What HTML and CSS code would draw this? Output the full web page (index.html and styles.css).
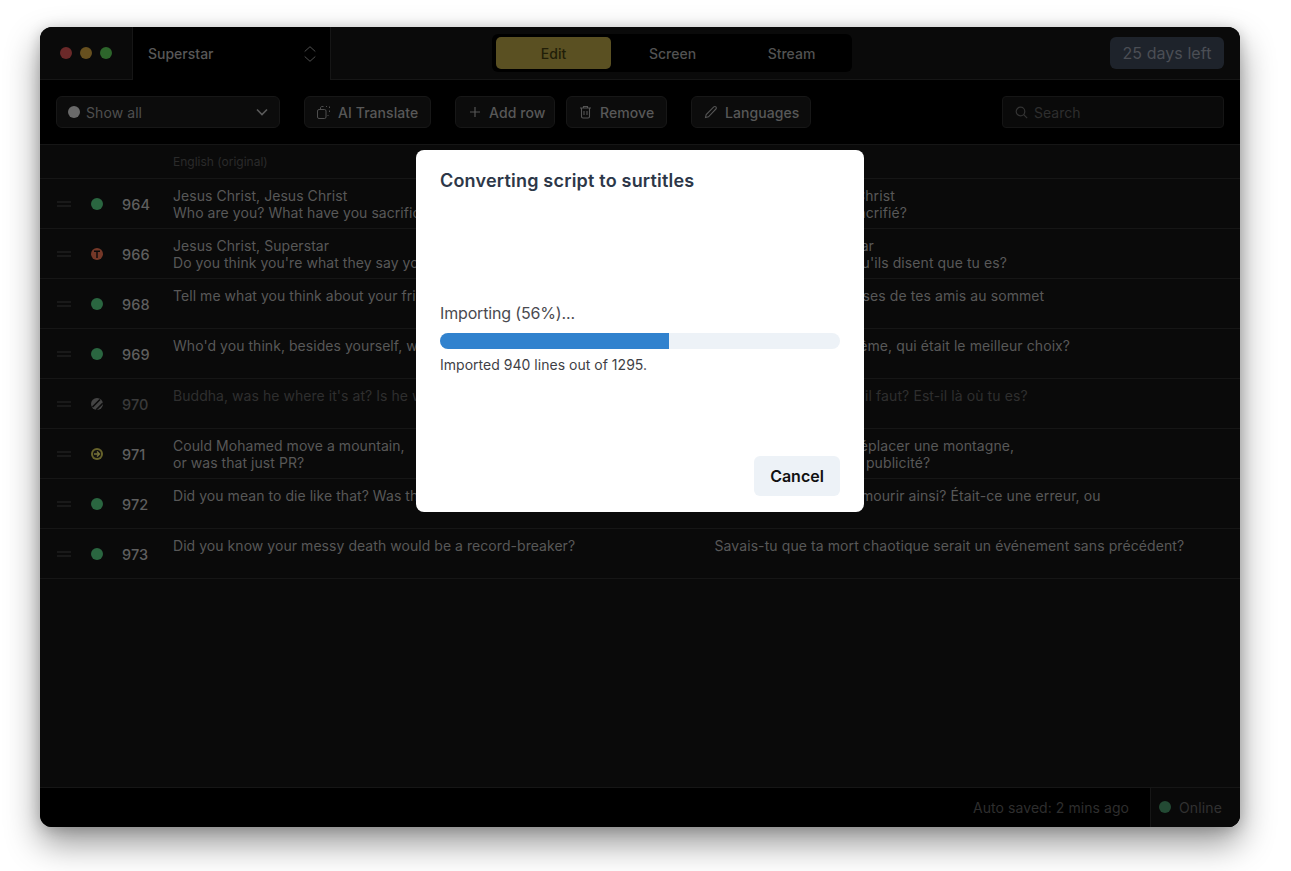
FILE: index.html
```html
<!DOCTYPE html>
<html lang="en">
<head>
<meta charset="utf-8">
<title>Superstar</title>
<link rel="stylesheet" href="styles.css">
</head>
<body>
<div class="window">
  <header class="topbar">
    <div class="traffic">
      <span class="light red"></span><span class="light amber"></span><span class="light green"></span>
    </div>
    <div class="project">
      <span>Superstar</span>
      <svg class="updown" width="12" height="16" viewBox="0 0 12 16" fill="none" stroke="#4e4e4e" stroke-width="1"><path d="M.7 5.500L6 .7l5.300 4.800M.7 10.500L6 15.300l5.300-4.800"/></svg>
    </div>
    <div class="tabs-wrap">
      <nav class="tabs">
        <span class="tab active">Edit</span>
        <span class="tab">Screen</span>
        <span class="tab">Stream</span>
      </nav>
    </div>
    <div class="badge">25 days left</div>
  </header>

  <div class="toolbar">
    <div class="btn select">
      <span class="select-dot"></span><span class="select-label">Show all</span>
      <svg width="12" height="8" viewBox="0 0 12 8" fill="none" stroke="#5a5a5a" stroke-width="1.6"><path d="M1 1.500l5 5 5-5"/></svg>
    </div>
    <div class="btn b-ai">
      <svg width="13" height="13" viewBox="0 0 13 13" fill="none" stroke="#4e4e4e" stroke-width="1"><rect x=".5" y="3.500" width="8.500" height="9" rx="1.500"/><path d="M3.500 3V2c0-.8.600-1.500 1.500-1.500h1.500M9 .5h1M12.500 .5V2M12.500 4.500V6M10.500 9.500h1"/></svg>
      <span>AI Translate</span>
    </div>
    <div class="btn b-add">
      <svg width="12" height="12" viewBox="0 0 12 12" fill="none" stroke="#555" stroke-width="1.200"><path d="M6 1v10M1 6h10"/></svg>
      <span>Add row</span>
    </div>
    <div class="btn b-remove">
      <svg width="13" height="14" viewBox="0 0 13 14" fill="none" stroke="#555" stroke-width="1.100"><path d="M1 3h11M4.500 3V1.500h4V3M2.500 3v8.500c0 .8.600 1.500 1.500 1.500h5c.9 0 1.500-.7 1.500-1.500V3M5 6v4M8 6v4"/></svg>
      <span>Remove</span>
    </div>
    <div class="btn b-lang">
      <svg width="14" height="14" viewBox="0 0 14 14" fill="none" stroke="#555" stroke-width="1.100"><path d="M1.500 12.500l.7-3L9.800 1.900c.6-.6 1.500-.6 2.100 0s.6 1.500 0 2.100L4.500 11.800z"/></svg>
      <span>Languages</span>
    </div>
    <div class="search">
      <svg width="13" height="13" viewBox="0 0 13 13" fill="none" stroke="#333" stroke-width="1.200"><circle cx="5.500" cy="5.500" r="4.300"/><path d="M8.700 8.700l3.500 3.500"/></svg>
      <span>Search</span>
    </div>
  </div>

  <div class="table-head"><span>English (original)</span></div>

  <main class="rows">
    <div class="row">
      <span class="handle"></span><span class="dot ok"></span><span class="num">964</span>
      <div class="cell">Jesus Christ, Jesus Christ<br>Who are you? What have you sacrificed?</div>
      <div class="cell">Jésus-Christ, Jésus-Christ<br>Qui es-tu? Qu'as-tu sacrifié?</div>
    </div>
    <div class="row">
      <span class="handle"></span>
      <span class="dot warn"><svg width="8" height="8" viewBox="0 0 8 8" fill="none" stroke="#0b0b0b" stroke-width="1.400"><path d="M1 1.200h6M4 1.200V8"/></svg></span>
      <span class="num">966</span>
      <div class="cell">Jesus Christ, Superstar<br>Do you think you're what they say you are?</div>
      <div class="cell">Jésus-Christ, Superstar<br>Penses-tu être celui qu'ils disent que tu es?</div>
    </div>
    <div class="row">
      <span class="handle"></span><span class="dot ok"></span><span class="num">968</span>
      <div class="cell">Tell me what you think about your friends at the top</div>
      <div class="cell">Dis-moi ce que tu penses de tes amis au sommet</div>
    </div>
    <div class="row">
      <span class="handle"></span><span class="dot ok"></span><span class="num">969</span>
      <div class="cell">Who'd you think, besides yourself, was the pick of the crop?</div>
      <div class="cell">Selon toi, à part toi-même, qui était le meilleur choix?</div>
    </div>
    <div class="row dim">
      <span class="handle"></span>
      <span class="dot off"><svg width="12" height="12" viewBox="0 0 12 12" fill="none" stroke="#0b0b0b" stroke-width="1.600"><path d="M1.500 9L9 1.500M5 12l7-7"/></svg></span>
      <span class="num">970</span>
      <div class="cell">Buddha, was he where it's at? Is he where you are?</div>
      <div class="cell">Bouddha, était-il là où il faut? Est-il là où tu es?</div>
    </div>
    <div class="row">
      <span class="handle"></span>
      <span class="dot next"><svg width="12" height="12" viewBox="0 0 12 12" fill="none" stroke="#77733a" stroke-width="1.300"><path d="M3 6h5.500M6 3.500L8.500 6 6 8.500"/></svg></span>
      <span class="num">971</span>
      <div class="cell">Could Mohamed move a mountain,<br>or was that just PR?</div>
      <div class="cell">Mahomet pourrait-il déplacer une montagne,<br>Ou était-ce juste de la publicité?</div>
    </div>
    <div class="row">
      <span class="handle"></span><span class="dot ok"></span><span class="num">972</span>
      <div class="cell">Did you mean to die like that? Was that a mistake, or</div>
      <div class="cell">Voulais-tu réellement mourir ainsi? Était-ce une erreur, ou</div>
    </div>
    <div class="row">
      <span class="handle"></span><span class="dot ok"></span><span class="num">973</span>
      <div class="cell">Did you know your messy death would be a record-breaker?</div>
      <div class="cell">Savais-tu que ta mort chaotique serait un événement sans précédent?</div>
    </div>
  </main>

  <footer class="footer">
    <span class="saved">Auto saved: 2 mins ago</span>
    <div class="status"><span class="status-dot"></span><span>Online</span></div>
  </footer>

  <section class="modal">
    <h2 class="modal-title">Converting script to surtitles</h2>
    <div class="progress-block">
      <div class="progress-label">Importing (56%)...</div>
      <div class="track"><div class="fill" style="width:57.200%"></div></div>
      <div class="progress-note">Imported 940 lines out of 1295.</div>
    </div>
    <div class="modal-foot"><button class="cancel">Cancel</button></div>
  </section>
</div>
</body>
</html>
```
FILE: styles.css
```css
* { box-sizing: border-box; }
html, body { margin: 0; height: 100%; overflow: hidden; background: #fff; }
body { padding: 27px 0 0 40px; font-family: Inter, "Liberation Sans", sans-serif; }

.window {
  position: relative;
  width: 1200px;
  height: 800px;
  display: flex;
  flex-direction: column;
  background: #0a0a0a;
  border-radius: 12px;
  box-shadow: 0 16px 34px rgba(0,0,0,.42), 0 2px 14px rgba(0,0,0,.18);
  overflow: hidden;
}

.topbar {
  height: 53px;
  flex: none;
  display: flex;
  border-bottom: 1px solid #161616;
  background: #0a0a0a;
}
.traffic {
  width: 92px;
  display: flex;
  align-items: center;
  gap: 8px;
  padding: 0 0 0 20px;
}
.light { width: 12px; height: 12px; border-radius: 50%; }
.red { background: #6a2929; }
.amber { background: #67501f; }
.green { background: #2d652b; }
.project {
  width: 199px;
  margin-bottom: -1px;
  display: flex;
  align-items: center;
  justify-content: space-between;
  padding: 0 14px 0 15px;
  background: #000;
  border-left: 1px solid #161616;
  border-right: 1px solid #161616;
  color: #585858;
  font-size: 14px;
  font-weight: 500;
}
.tabs-wrap { flex: 1; display: flex; align-items: center; margin-left: 161px; }
.tabs {
  width: 360px;
  height: 38px;
  padding: 3px 0 3px 4px;
  display: flex;
  background: #000;
  border-radius: 6px;
}
.tab {
  flex: none;
  width: 119px;
  display: flex;
  align-items: center;
  justify-content: center;
  color: #525252;
  font-size: 14px;
  font-weight: 500;
  border-radius: 5px;
}
.tab.active { width: 115px; margin-right: 2px; background: #5a5022; color: #211e08; }
.badge {
  width: 114px;
  height: 32px;
  margin: 10px 16px 0 0;
  display: flex;
  align-items: center;
  justify-content: center;
  background: #1e232b;
  border-radius: 6px;
  color: #4b4e55;
  font-size: 16px;
  letter-spacing: .05px;
}

.toolbar {
  height: 65px;
  flex: none;
  display: flex;
  align-items: center;
  padding: 0 16px;
  background: #000;
  border-bottom: 1px solid #161616;
}
.btn {
  height: 32px;
  display: flex;
  align-items: center;
  gap: 8px;
  background: #0c0c0c;
  border: 1px solid #171717;
  border-radius: 6px;
  color: #585858;
  font-size: 14px;
  font-weight: 500;
  letter-spacing: .08px;
}
.select { width: 224px; padding: 0 11px 0 11px; font-weight: 400; gap: 6px; }
.select-label { flex: 1; color: #4f4f4f; }
.select-dot { width: 12px; height: 12px; border-radius: 50%; background: #696969; }
.b-ai { width: 127px; margin-left: 24px; padding-left: 12px; }
.b-add { width: 100px; margin-left: 24px; padding-left: 13px; }
.b-remove { width: 101px; margin-left: 11px; padding-left: 12px; }
.b-lang { width: 120px; margin-left: 24px; padding-left: 12px; gap: 7px; }
.search {
  width: 222px;
  height: 32px;
  margin-left: auto;
  display: flex;
  align-items: center;
  gap: 6px;
  padding-left: 12px;
  background: #0a0a0a;
  border: 1px solid #151515;
  border-radius: 4px;
  color: #2e2e2e;
  font-size: 14px;
}

.table-head {
  height: 34px;
  flex: none;
  padding: 9px 0 0 133px;
  font-size: 12px;
  line-height: 16px;
  color: #2b2b2b;
  border-bottom: 1px solid #161616;
}

.rows { flex: 1; min-height: 0; }
.row {
  height: 50px;
  display: grid;
  grid-template-columns: 133px 541.500px 1fr;
  grid-template-rows: 1fr;
  position: relative;
  border-bottom: 1px solid #161616;
}
.cell { padding-top: 8px; font-size: 14px; line-height: 17px; color: #585858; letter-spacing: .05px; grid-row: 1; }
.cell:nth-of-type(1) { grid-column: 2; }
.cell:nth-of-type(2) { grid-column: 3; letter-spacing: .09px; }
.handle {
  position: absolute;
  left: 17px;
  top: 22px;
  width: 14px;
  height: 6px;
  border-top: 2px solid #191919;
  border-bottom: 2px solid #191919;
}
.dot {
  position: absolute;
  left: 51px;
  top: 19px;
  width: 12px;
  height: 12px;
  border-radius: 50%;
  display: flex;
  align-items: center;
  justify-content: center;
  overflow: hidden;
}
.ok { background: #2a6640; }
.warn { background: #753828; }
.off { background: #444; }
.next { background: #111; box-shadow: inset 0 0 0 2px #66622a; }
.num {
  position: absolute;
  left: 82px;
  top: 16px;
  font-size: 14.500px;
  line-height: 20px;
  font-weight: 500;
  letter-spacing: .1px;
  color: #5f5f5f;
}
.dim .cell { color: #2f2f2f; }
.dim .num { color: #3a3a3a; }

.footer {
  height: 40px;
  flex: none;
  display: flex;
  justify-content: flex-end;
  align-items: stretch;
  padding-bottom: 1px;
  background: #000;
  border-top: 1px solid #161616;
}
.saved { align-self: center; margin-right: 21px; color: #2e2e2e; font-size: 14px; letter-spacing: .06px; }
.status {
  width: 90px;
  margin-bottom: -1px;
  display: flex;
  align-items: center;
  gap: 8px;
  padding: 0 0 1px 8px;
  border-left: 1px solid #161616;
  background: #090909;
  color: #313131;
  font-size: 14px;
  letter-spacing: .15px;
}
.status-dot { width: 12px; height: 12px; border-radius: 50%; background: #234a34; }

.modal {
  position: absolute;
  left: 376px;
  top: 123px;
  width: 448px;
  height: 362px;
  display: flex;
  flex-direction: column;
  padding: 20px 24px 16px;
  background: #fff;
  border-radius: 8px;
}
.modal-title { margin: 0; font-size: 18px; line-height: 22px; font-weight: 600; letter-spacing: .2px; color: #2d3748; }
.progress-block { margin-top: 111px; flex: 1; }
.progress-label { font-size: 16px; line-height: 20px; letter-spacing: -.16px; color: #4a4a4f; }
.track { height: 16px; margin-top: 10px; border-radius: 8px; background: #edf2f7; overflow: hidden; }
.fill { height: 100%; background: #3182ce; }
.progress-note { margin-top: 7px; font-size: 14px; line-height: 17px; letter-spacing: .02px; color: #3f3f46; }
.modal-foot { display: flex; justify-content: flex-end; }
.cancel {
  width: 86px;
  height: 40px;
  border: 0;
  border-radius: 6px;
  background: #edf2f7;
  color: #111;
  font: 600 16px Inter, "Liberation Sans", sans-serif;
}
```
